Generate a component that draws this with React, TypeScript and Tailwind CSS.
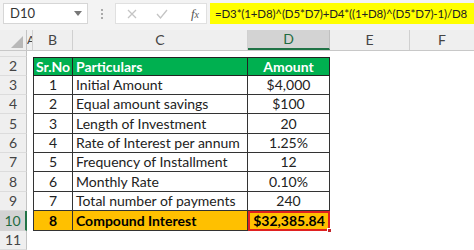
import React from "react";

const rows = [
  { n: 3, sr: "1", label: "Initial Amount", amt: "$4,000", h: "h-[19px]" },
  { n: 4, sr: "2", label: "Equal amount savings", amt: "$100", h: "h-[19px]" },
  { n: 5, sr: "3", label: "Length of Investment", amt: "20", h: "h-[20px]" },
  { n: 6, sr: "4", label: "Rate of Interest per annum", amt: "1.25%", h: "h-[19px]" },
  { n: 7, sr: "5", label: "Frequency of Installment", amt: "12", h: "h-[19px]" },
  { n: 8, sr: "6", label: "Monthly Rate", amt: "0.10%", h: "h-[20px]" },
  { n: 9, sr: "7", label: "Total number of payments", amt: "240", h: "h-[19px]" },
];

function RowHead({ n, active }: { n: number | string; active?: boolean }) {
  return (
    <div
      className={
        active
          ? "w-[27px] shrink-0 flex items-center justify-center bg-[#d3d3d3] border-r-2 border-r-[#217346] border-b border-b-[#d4d4d4] text-[#1e6b41]"
          : "w-[27px] shrink-0 flex items-center justify-center bg-[#efefef] border-r border-r-[#c3c3c3] border-b border-b-[#dcdcdc] text-[#444]"
      }
    >
      {n}
    </div>
  );
}

export default function App() {
  return (
    <div className="w-[474px] h-[250px] overflow-hidden bg-white text-[14px] leading-none text-[#222] font-['Lato',sans-serif]">
      {/* formula bar */}
      <div className="h-[30px] bg-[#f3f3f3] flex items-start pt-[3px] pl-[3px]">
        <div className="w-[85px] h-[21px] bg-white border border-[#d6d6d6] flex items-center justify-between pl-[6px] pr-[5px] text-[13px] text-[#333]">
          <span>D10</span>
          <svg width="8" height="5" viewBox="0 0 8 5"><path d="M0 0h8L4 5z" fill="#777" /></svg>
        </div>
        <div className="w-[27px] h-[21px] flex flex-col items-center justify-center gap-[2px]">
          <span className="w-[2px] h-[2px] bg-[#aaa]" />
          <span className="w-[2px] h-[2px] bg-[#aaa]" />
          <span className="w-[2px] h-[2px] bg-[#aaa]" />
        </div>
        <div className="w-[92px] h-[21px] bg-white border border-[#e0e0e0] flex items-center pl-[11px] pr-[7px]">
          <svg width="10" height="10" viewBox="0 0 10 10"><path d="M1 1l8 8M9 1l-8 8" stroke="#c4c4c4" strokeWidth="1.3" /></svg>
          <svg className="ml-[19px]" width="12" height="10" viewBox="0 0 12 10"><path d="M1 5l3.5 4L11 1" stroke="#c4c4c4" strokeWidth="1.3" fill="none" /></svg>
          <span className="ml-auto italic text-[13px] text-[#555] font-['Liberation_Serif',serif]">f<span className="text-[10px]">x</span></span>
        </div>
        <div className="ml-[3px] flex-1 h-[21px] bg-[#ffff00] flex items-center pl-[5px] text-[11.5px] tracking-[-0.15px] text-[#222] whitespace-nowrap overflow-hidden">
          =D3*(1+D8)^(D5*D7)+D4*((1+D8)^(D5*D7)-1)/D8
        </div>
      </div>

      {/* column headers */}
      <div className="h-[21px] flex bg-[#efefef] border-b border-[#c8c8c8] text-[#444]">
        <div className="w-[27px] shrink-0 border-r border-[#c3c3c3] relative">
          <svg className="absolute right-[3px] bottom-[2px]" width="12" height="12" viewBox="0 0 12 12"><path d="M12 0v12H0z" fill="#b8b8b8" /></svg>
        </div>
        <div className="w-[6px] shrink-0 border-r border-[#d0d0d0] overflow-hidden flex items-center text-[12px]">A</div>
        <div className="w-[40px] shrink-0 border-r border-[#d0d0d0] flex items-center justify-center">B</div>
        <div className="w-[175px] shrink-0 border-r border-[#d0d0d0] flex items-center justify-center">C</div>
        <div className="w-[82px] shrink-0 bg-[#d3d3d3] border-r border-[#c0c0c0] border-b-2 border-b-[#217346] flex items-center justify-center text-[#1e6b41]">D</div>
        <div className="w-[80px] shrink-0 border-r border-[#d0d0d0] flex items-center justify-center">E</div>
        <div className="flex-1 flex items-center justify-center">F</div>
      </div>

      {/* row 1 (mostly hidden) */}
      <div className="h-[6px] flex">
        <div className="w-[27px] bg-[#efefef] border-r border-[#c3c3c3] border-b border-b-[#dcdcdc]" />
      </div>

      {/* header row 2 */}
      <div className="h-[19px] flex">
        <RowHead n={2} />
        <div className="w-[6px] shrink-0" />
        <div className="w-[40px] shrink-0 bg-[#00b050] border border-[#222] flex items-center justify-center font-bold text-white">Sr.No</div>
        <div className="w-[175px] shrink-0 bg-[#00b050] border-y border-r border-[#222] flex items-center pl-[3px] font-bold text-white">Particulars</div>
        <div className="w-[82px] shrink-0 bg-[#00b050] border-y border-r border-[#222] flex items-center justify-center font-bold text-white">Amount</div>
      </div>

      {rows.map((r) => (
        <div key={r.n} className={`${r.h} flex`}>
          <RowHead n={r.n} />
          <div className="w-[6px] shrink-0" />
          <div className="w-[40px] shrink-0 border-x border-b border-[#333] flex items-center justify-center">{r.sr}</div>
          <div className="w-[175px] shrink-0 border-b border-r border-[#333] flex items-center pl-[3px] whitespace-nowrap">{r.label}</div>
          <div className="w-[82px] shrink-0 border-b border-r border-[#333] flex items-center justify-center">{r.amt}</div>
        </div>
      ))}

      {/* row 10 */}
      <div className="h-[20px] flex">
        <RowHead n={10} active />
        <div className="w-[6px] shrink-0" />
        <div className="w-[40px] shrink-0 bg-[#ffc000] border-x border-b border-[#333] flex items-center justify-center font-bold text-black">8</div>
        <div className="w-[175px] shrink-0 bg-[#ffc000] border-b border-r border-[#333] flex items-center pl-[3px] font-bold text-black">Compound Interest</div>
        <div className="w-[82px] shrink-0 bg-[#ffc000] border-2 border-[#e02020] flex items-center justify-center font-bold text-black relative">
          $32,385.84
          <span className="absolute -right-[4px] -bottom-[4px] w-[5px] h-[5px] bg-[#c0272d] border border-white" />
        </div>
      </div>

      {/* row 11 */}
      <div className="h-[19px] flex">
        <RowHead n={11} />
      </div>
    </div>
  );
}
